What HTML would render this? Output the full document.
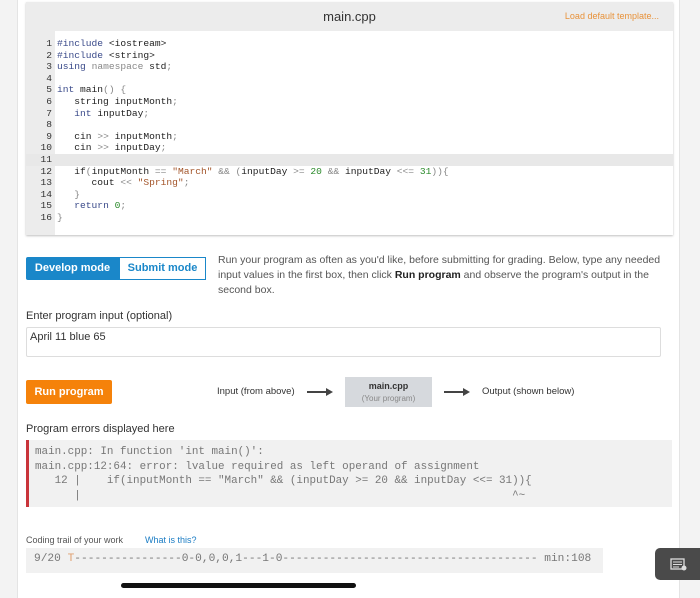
<!DOCTYPE html>
<html><head><meta charset="utf-8"><style>
*{margin:0;padding:0;box-sizing:border-box}
body{width:700px;height:593px;background:#f3f3f3;font-family:"Liberation Sans",sans-serif;position:relative;overflow:hidden;color:#333}
.card{position:absolute;left:17px;top:-2px;width:663px;height:600px;background:#fff;border-left:1px solid #e4e4e4;border-right:1px solid #e4e4e4}
.abs{position:absolute}
.ed{left:26px;top:2px;width:647px;height:233px;background:#fff;box-shadow:0 1px 2px rgba(0,0,0,.25)}
.hd{position:absolute;left:0;top:0;width:100%;height:29px;background:#ececec}
.gut{position:absolute;left:0;top:29px;width:29px;height:204px;background:#ececec}
.code{position:absolute;left:0;top:36px;width:100%;font-family:"Liberation Mono",monospace;font-size:9.6px;line-height:11.6px;color:#222;white-space:pre}
.ln{display:inline-block;width:26px;text-align:right;color:#333;margin-right:5px}
.k{color:#3a4a8a}.g{color:#888}.s{color:#a3552a}.n{color:#2a8a2a}
.hl{background:#e8e8e8}
.mono{font-family:"Liberation Mono",monospace}
</style></head><body>
<div class="card"></div>
<div class="abs ed">
 <div class="hd"><div class="abs" style="left:0;width:100%;top:7px;text-align:center;font-size:13px;color:#333">main.cpp</div>
 <div class="abs" style="right:14px;top:9px;font-size:9px;color:#e8923a">Load default template...</div></div>
 <div class="gut"></div>
 <div class="code"><div><span class="ln">1</span><span class="k">#include</span> &lt;iostream&gt;</div><div><span class="ln">2</span><span class="k">#include</span> &lt;string&gt;</div><div><span class="ln">3</span><span class="k">using</span> <span class="g">namespace</span> std<span class="g">;</span></div><div><span class="ln">4</span></div><div><span class="ln">5</span><span class="k">int</span> main<span class="g">() {</span></div><div><span class="ln">6</span>   string inputMonth<span class="g">;</span></div><div><span class="ln">7</span>   <span class="k">int</span> inputDay<span class="g">;</span></div><div><span class="ln">8</span></div><div><span class="ln">9</span>   cin <span class="g">&gt;&gt;</span> inputMonth<span class="g">;</span></div><div><span class="ln">10</span>   cin <span class="g">&gt;&gt;</span> inputDay<span class="g">;</span></div><div class="hl"><span class="ln">11</span></div><div><span class="ln">12</span>   if<span class="g">(</span>inputMonth <span class="g">==</span> <span class="s">"March"</span> <span class="g">&amp;&amp; (</span>inputDay <span class="g">&gt;=</span> <span class="n">20</span> <span class="g">&amp;&amp;</span> inputDay <span class="g">&lt;&lt;=</span> <span class="n">31</span><span class="g">)){</span></div><div><span class="ln">13</span>      cout <span class="g">&lt;&lt;</span> <span class="s">"Spring"</span><span class="g">;</span></div><div><span class="ln">14</span>   <span class="g">}</span></div><div><span class="ln">15</span>   <span class="k">return</span> <span class="n">0</span><span class="g">;</span></div><div><span class="ln">16</span><span class="g">}</span></div></div>
</div>
<div class="abs" style="left:26px;top:257px;width:93px;height:23px;background:#1a87c9;color:#fff;font-size:11px;font-weight:bold;text-align:center;line-height:23px;border-radius:2px 0 0 2px">Develop mode</div>
<div class="abs" style="left:119px;top:257px;width:87px;height:23px;border:1px solid #1a87c9;color:#1a87c9;font-size:11px;font-weight:bold;text-align:center;line-height:21px">Submit mode</div>
<div class="abs" style="left:218px;top:253px;width:455px;font-size:10.5px;line-height:15px;color:#555">Run your program as often as you'd like, before submitting for grading. Below, type any needed input values in the first box, then click <b style="color:#222">Run program</b> and observe the program's output in the second box.</div>
<div class="abs" style="left:26px;top:310px;font-size:11px;color:#333">Enter program input (optional)</div>
<div class="abs" style="left:26px;top:327px;width:635px;height:30px;border:1px solid #ddd;border-radius:2px;font-size:11px;padding:3px 3px;color:#333">April 11 blue 65</div>
<div class="abs" style="left:26px;top:380px;width:86px;height:24px;background:#f5820a;color:#fff;font-size:11px;font-weight:bold;text-align:center;line-height:24px;border-radius:2px">Run program</div>
<div class="abs" style="left:217px;top:386px;font-size:9.5px;color:#333">Input (from above)</div>
<svg class="abs" style="left:307px;top:387px" width="28" height="10"><path d="M0 5H20" stroke="#444" stroke-width="2"/><path d="M19 1L26 5L19 9Z" fill="#444"/></svg>
<div class="abs" style="left:345px;top:377px;width:87px;height:30px;background:#d6d9dd;text-align:center;font-size:9px;line-height:12px;padding-top:3px;color:#333"><b>main.cpp</b><br><span style="color:#888;font-size:8px">(Your program)</span></div>
<svg class="abs" style="left:444px;top:387px" width="28" height="10"><path d="M0 5H20" stroke="#444" stroke-width="2"/><path d="M19 1L26 5L19 9Z" fill="#444"/></svg>
<div class="abs" style="left:482px;top:386px;font-size:9.5px;color:#333">Output (shown below)</div>
<div class="abs" style="left:26px;top:423px;font-size:11px;color:#333">Program errors displayed here</div>
<div class="abs mono" style="left:26px;top:440px;width:646px;height:67px;background:#f1f1f1;border-left:3px solid #c9343a;padding:5px 0 0 6px;font-size:10.9px;line-height:14.6px;color:#777;white-space:pre">main.cpp: In function 'int main()':
main.cpp:12:64: error: lvalue required as left operand of assignment
   12 |    if(inputMonth == "March" &amp;&amp; (inputDay &gt;= 20 &amp;&amp; inputDay &lt;&lt;= 31)){
      |                                                                  ^~</div>
<div class="abs" style="left:26px;top:535px;font-size:9px;color:#555">Coding trail of your work</div>
<div class="abs" style="left:145px;top:535px;font-size:9px;color:#1a7cc4">What is this?</div>
<div class="abs mono" style="left:26px;top:548px;width:577px;height:25px;background:#f1f1f1;padding:5px 0 0 8px;font-size:11.2px;color:#777;white-space:pre">9/20 <span style="color:#e0a070">T</span>----------------0-0,0,0,1---1-0-------------------------------------- min:108</div>
<div class="abs" style="left:655px;top:548px;width:50px;height:32px;background:#4a4a4a;border-radius:5px"><svg style="position:absolute;left:15px;top:10px" width="18" height="13"><rect x="1" y="1" width="13" height="10" fill="none" stroke="#ddd" stroke-width="1.3"/><path d="M3 4H12M3 6.5H12M3 9H9" stroke="#ddd"/><circle cx="14" cy="10" r="2.5" fill="#ddd"/></svg></div>
<div class="abs" style="left:121px;top:583px;width:235px;height:5px;background:#111;border-radius:3px"></div>
</body></html>
